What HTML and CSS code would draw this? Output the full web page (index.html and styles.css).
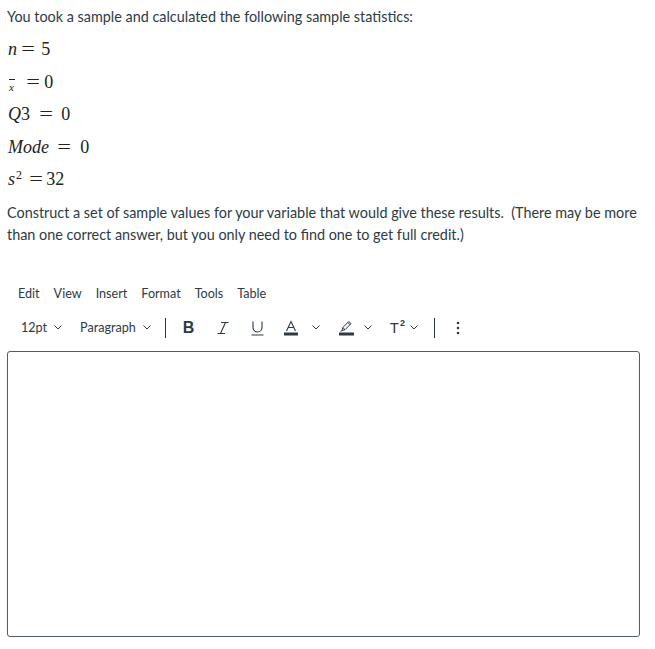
FILE: index.html
```html
<!DOCTYPE html>
<html>
<head>
<meta charset="utf-8">
<link rel="stylesheet" href="styles.css">
</head>
<body>
<div class="page">
  <p class="intro">You took a sample and calculated the following sample statistics:</p>
  <div class="math first"><i>n</i><span class="eq e1">=</span>5</div>
  <div class="math"><span class="xbar"><span class="bar"></span><i>x</i></span><span class="eq e2">=</span>0</div>
  <div class="math"><i>Q</i>3<span class="eq e3">=</span>0</div>
  <div class="math"><i>Mode</i><span class="eq e4">=</span>0</div>
  <div class="math"><i>s</i><sup>2</sup><span class="eq e5">=</span>32</div>
  <p class="task">Construct a set of sample values for your variable that would give these results.&nbsp; (There may be more than one correct answer, but you only need to find one to get full credit.)</p>

  <div class="editor">
    <div class="menubar">
      <span>Edit</span><span>View</span><span>Insert</span><span>Format</span><span>Tools</span><span>Table</span>
    </div>
    <div class="toolbar">
      <span class="tb-item size">12pt</span>
      <svg class="chev c-size" viewBox="0 0 8 5"><path d="M0.5 0.5l3.5 3.5 3.5-3.5"/></svg>
      <span class="tb-item para">Paragraph</span>
      <svg class="chev c-para" viewBox="0 0 8 5"><path d="M0.5 0.5l3.5 3.5 3.5-3.5"/></svg>
      <span class="sep s1"></span>
      <span class="ic bold">B</span>
      <svg class="ic ital" width="12" height="16" viewBox="0 0 12 16"><path d="M4 2.5h7.5M0.5 13.5h7.5M8.5 2.5L3.5 13.5" fill="none" stroke="#2d3b45" stroke-width="1.1"/></svg>
      <svg class="ic under" width="13" height="16" viewBox="0 0 13 16"><path d="M2 1.5v6a4.5 4.5 0 0 0 9 0v-6M0.5 15h12" fill="none" stroke="#2d3b45" stroke-width="1.1"/></svg>
      <svg class="ic fcol" width="14" height="16" viewBox="0 0 14 16"><path d="M2.5 11L7 1.5l4.5 9.5M4.2 7.5h5.6" fill="none" stroke="#2d3b45" stroke-width="1.1"/><rect x="0" y="12.5" width="14" height="3" fill="#2d3b45"/></svg>
      <svg class="chev c-fcol" viewBox="0 0 8 5"><path d="M0.5 0.5l3.5 3.5 3.5-3.5"/></svg>
      <svg class="ic hl" width="15" height="16" viewBox="0 0 15 16"><path d="M3 10.5l0.8-3 6-6 2.2 2.2-6 6zM8.8 2.5l2.2 2.2M3.8 7.5l2.2 2.2M3 10.5l-1.5 1" fill="none" stroke="#2d3b45" stroke-width="1" stroke-linejoin="round"/><rect x="0" y="12.5" width="15" height="3" fill="#2d3b45"/></svg>
      <svg class="chev c-hl" viewBox="0 0 8 5"><path d="M0.5 0.5l3.5 3.5 3.5-3.5"/></svg>
      <span class="ic tsup">T<sup>2</sup></span>
      <svg class="chev c-t" viewBox="0 0 8 5"><path d="M0.5 0.5l3.5 3.5 3.5-3.5"/></svg>
      <span class="sep s2"></span>
      <svg class="ic more" width="4" height="14" viewBox="0 0 4 14"><circle cx="2" cy="2" r="1.3" fill="#2d3b45"/><circle cx="2" cy="7" r="1.3" fill="#2d3b45"/><circle cx="2" cy="12" r="1.3" fill="#2d3b45"/></svg>
    </div>
    <div class="area"></div>
  </div>
</div>
</body>
</html>
```

FILE: styles.css
```css
html, body {
  margin: 0;
  padding: 0;
  background: #fff;
}
.page {
  padding: 0 15px 0 7px;
  font-family: Lato, "Liberation Sans", sans-serif;
  font-size: 14.4px;
  color: #2d3b45;
}
.intro {
  margin: 0;
  padding-top: 8px;
  line-height: 18px;
}
.math {
  font-family: "Liberation Serif", "DejaVu Serif", serif;
  font-size: 18px;
  color: #222;
  height: 32.5px;
  display: flex;
  align-items: center;
  line-height: 1;
  padding-left: 1px;
}
.math.first { margin-top: 7px; }
.math i { font-style: italic; }
.math sup {
  font-size: 12px;
  position: relative;
  top: -4px;
  vertical-align: top;
  margin-left: 1px;
}
.eq {
  display: inline-block;
  transform: scaleX(1.35);
}
.e1 { margin: 0 8px 0 6px; }
.e2 { margin: 0 6px 0 13px; }
.e3 { margin: 0 10px 0 11px; }
.e4 { margin: 0 11px 0 10px; }
.e5 { margin: 0 5px 0 9px; }
.xbar {
  display: inline-flex;
  flex-direction: column;
  align-items: center;
  width: 7px;
  position: relative;
  top: 4px;
}
.xbar .bar {
  width: 6px;
  height: 1px;
  background: #222;
  margin-bottom: 2px;
}
.xbar i { font-size: 11px; }
.task {
  margin: 6px -8px 0 0;
  line-height: 22px;
}
.editor {
  margin-top: 37px;
}
.menubar {
  display: flex;
  gap: 14px;
  font-size: 12.6px;
  padding-left: 11px;
  height: 22px;
  align-items: center;
}
.toolbar {
  display: flex;
  align-items: center;
  height: 26px;
  margin-top: 10px;
  padding-left: 14px;
  font-size: 12.6px;
}
.chev {
  width: 8px;
  height: 5px;
  flex: none;
  fill: none;
  stroke: #2d3b45;
  stroke-width: 1;
}
.c-size { margin-left: 7px; }
.para { margin-left: 18px; }
.c-para { margin-left: 7px; }
.sep {
  width: 1px;
  height: 20px;
  background: #2d3b45;
  flex: none;
}
.s1 { margin-left: 14px; }
.ic { flex: none; }
.bold {
  font-family: "Liberation Sans", Arial, sans-serif;
  font-weight: bold;
  font-size: 16px;
  margin-left: 17px;
  width: 11px;
}
.ital { margin-left: 23px; }
.under { margin-left: 22px; }
.fcol { margin-left: 20px; }
.c-fcol { margin-left: 14px; }
.hl { margin-left: 19px; }
.c-hl { margin-left: 10px; }
.tsup {
  margin-left: 18px;
  width: 15px;
  font-family: "Liberation Sans", sans-serif;
  font-size: 15px;
  line-height: 1;
  display: inline-flex;
}
.tsup sup {
  font-size: 9px;
  font-weight: bold;
  line-height: 1;
  margin-left: 1px;
  margin-top: -1px;
}
.c-t { margin-left: 5px; }
.s2 { margin-left: 16px; }
.more { margin-left: 21px; }
.area {
  margin-top: 10px;
  height: 284px;
  border: 1px solid #4f5d68;
  border-radius: 3px;
}
```
